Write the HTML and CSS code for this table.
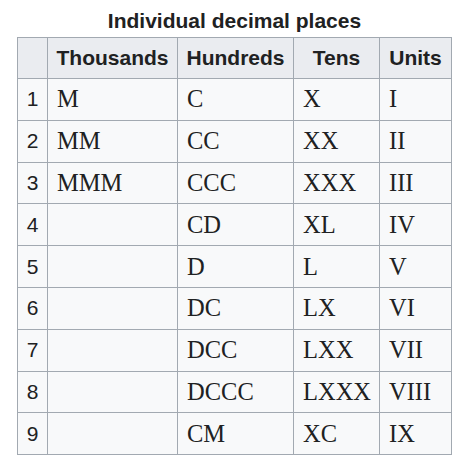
FILE: index.html
```html
<!DOCTYPE html>
<html>
<head>
<meta charset="utf-8">
<link rel="stylesheet" href="styles.css">
</head>
<body>
<table class="wikitable">
  <caption class="cap">Individual decimal places</caption>
  <colgroup>
    <col class="c-num"><col class="c-th"><col class="c-h"><col class="c-t"><col class="c-u">
  </colgroup>
  <thead>
    <tr><th></th><th>Thousands</th><th>Hundreds</th><th>Tens</th><th>Units</th></tr>
  </thead>
  <tbody>
    <tr><td class="num">1</td><td class="rn">M</td><td class="rn">C</td><td class="rn">X</td><td class="rn">I</td></tr>
    <tr><td class="num">2</td><td class="rn">MM</td><td class="rn">CC</td><td class="rn">XX</td><td class="rn">II</td></tr>
    <tr><td class="num">3</td><td class="rn">MMM</td><td class="rn">CCC</td><td class="rn">XXX</td><td class="rn">III</td></tr>
    <tr><td class="num">4</td><td class="rn"></td><td class="rn">CD</td><td class="rn">XL</td><td class="rn">IV</td></tr>
    <tr><td class="num">5</td><td class="rn"></td><td class="rn">D</td><td class="rn">L</td><td class="rn">V</td></tr>
    <tr><td class="num">6</td><td class="rn"></td><td class="rn">DC</td><td class="rn">LX</td><td class="rn">VI</td></tr>
    <tr><td class="num">7</td><td class="rn"></td><td class="rn">DCC</td><td class="rn">LXX</td><td class="rn">VII</td></tr>
    <tr><td class="num">8</td><td class="rn"></td><td class="rn">DCCC</td><td class="rn">LXXX</td><td class="rn">VIII</td></tr>
    <tr><td class="num">9</td><td class="rn"></td><td class="rn">CM</td><td class="rn">XC</td><td class="rn">IX</td></tr>
  </tbody>
</table>
</body>
</html>
```
FILE: styles.css
```css
html, body {
  background: #ffffff;
}
body {
  margin: 9px 0 0 17px;
  font-family: "Liberation Sans", Arial, sans-serif;
  font-size: 21px;
  color: #202122;
}
.wikitable {
  border-collapse: collapse;
  table-layout: fixed;
  width: 434px;
  background: #f8f9fa;
  border: 1px solid #a2a9b1;
}
.cap {
  font-weight: bold;
  line-height: 24px;
  padding-bottom: 4px;
  text-align: center;
}
.c-num { width: 30px; }
.c-th { width: 130px; }
.c-h { width: 116px; }
.c-t { width: 86px; }
.c-u { width: 72px; }
.wikitable th,
.wikitable td {
  border: 1px solid #a2a9b1;
  padding: 0 9px;
  vertical-align: middle;
}
.wikitable thead tr {
  height: 41px;
}
.wikitable tbody tr {
  height: 41.8px;
}
.wikitable th {
  background: #eaecf0;
  font-weight: bold;
  text-align: center;
  padding: 0 4px;
}
.num {
  text-align: center;
  padding: 0 !important;
}
.rn {
  font-family: "Liberation Serif", "Times New Roman", serif;
  font-size: 24.5px;
  text-align: left;
}
```
